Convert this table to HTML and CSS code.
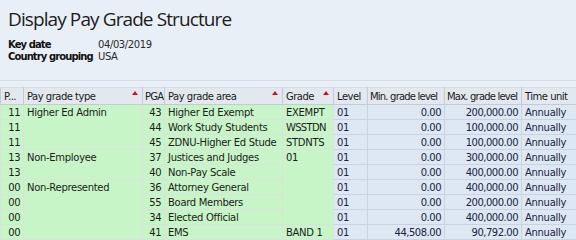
FILE: index.html
```html
<!DOCTYPE html>
<html>
<head>
<meta charset="utf-8">
<link rel="stylesheet" href="styles.css">
</head>
<body>
<div class="page">
  <h1 class="title">Display Pay Grade Structure</h1>
  <div class="meta">
    <div class="meta-row"><span class="meta-label">Key date</span><span class="meta-value">04/03/2019</span></div>
    <div class="meta-row"><span class="meta-label">Country grouping</span><span class="meta-value">USA</span></div>
  </div>
  <div class="sep"></div>
  <table class="grid">
    <colgroup>
      <col class="c1"><col class="c2"><col class="c3"><col class="c4"><col class="c5"><col class="c6"><col class="c7"><col class="c8"><col class="c9">
    </colgroup>
    <thead>
      <tr>
        <th>P...</th>
        <th class="sorted">Pay grade type</th>
        <th class="tight">PGA</th>
        <th class="sorted">Pay grade area</th>
        <th class="sorted">Grade</th>
        <th>Level</th>
        <th class="tight">Min. grade level</th>
        <th class="tight">Max. grade level</th>
        <th>Time unit</th>
      </tr>
    </thead>
    <tbody>
      <tr>
        <td class="k num">11</td>
        <td class="k" rowspan="3">Higher Ed Admin</td>
        <td class="k num">43</td>
        <td class="k">Higher Ed Exempt</td>
        <td class="k">EXEMPT</td>
        <td class="v">01</td>
        <td class="v num">0.00</td>
        <td class="v num">200,000.00</td>
        <td class="v">Annually</td>
      </tr>
      <tr>
        <td class="k num">11</td>
        <td class="k num">44</td>
        <td class="k">Work Study Students</td>
        <td class="k trunc">WSSTDN<span class="dots">...</span></td>
        <td class="v">01</td>
        <td class="v num">0.00</td>
        <td class="v num">100,000.00</td>
        <td class="v">Annually</td>
      </tr>
      <tr>
        <td class="k num">11</td>
        <td class="k num">45</td>
        <td class="k">ZDNU-Higher Ed Stude</td>
        <td class="k">STDNTS</td>
        <td class="v">01</td>
        <td class="v num">0.00</td>
        <td class="v num">100,000.00</td>
        <td class="v">Annually</td>
      </tr>
      <tr>
        <td class="k num">13</td>
        <td class="k" rowspan="2">Non-Employee</td>
        <td class="k num">37</td>
        <td class="k">Justices and Judges</td>
        <td class="k" rowspan="5">01</td>
        <td class="v">01</td>
        <td class="v num">0.00</td>
        <td class="v num">300,000.00</td>
        <td class="v">Annually</td>
      </tr>
      <tr>
        <td class="k num">13</td>
        <td class="k num">40</td>
        <td class="k">Non-Pay Scale</td>
        <td class="v">01</td>
        <td class="v num">0.00</td>
        <td class="v num">400,000.00</td>
        <td class="v">Annually</td>
      </tr>
      <tr>
        <td class="k num">00</td>
        <td class="k" rowspan="4">Non-Represented</td>
        <td class="k num">36</td>
        <td class="k">Attorney General</td>
        <td class="v">01</td>
        <td class="v num">0.00</td>
        <td class="v num">400,000.00</td>
        <td class="v">Annually</td>
      </tr>
      <tr>
        <td class="k num">00</td>
        <td class="k num">55</td>
        <td class="k">Board Members</td>
        <td class="v">01</td>
        <td class="v num">0.00</td>
        <td class="v num">200,000.00</td>
        <td class="v">Annually</td>
      </tr>
      <tr>
        <td class="k num">00</td>
        <td class="k num">34</td>
        <td class="k">Elected Official</td>
        <td class="v">01</td>
        <td class="v num">0.00</td>
        <td class="v num">400,000.00</td>
        <td class="v">Annually</td>
      </tr>
      <tr>
        <td class="k num">00</td>
        <td class="k num">41</td>
        <td class="k">EMS</td>
        <td class="k">BAND 1</td>
        <td class="v">01</td>
        <td class="v num">44,508.00</td>
        <td class="v num">90,792.00</td>
        <td class="v">Annually</td>
      </tr>
    </tbody>
  </table>
</div>
</body>
</html>
```

FILE: styles.css
```css
html, body {
  margin: 0;
  padding: 0;
  background: #e9eff6;
}
.page {
  font-family: "DejaVu Sans", Verdana, sans-serif;
  color: #222;
}
.title {
  margin: 0;
  padding: 7px 0 0 8px;
  height: 28px;
  box-sizing: border-box;
  font-family: "Open Sans", "DejaVu Sans", sans-serif;
  font-weight: 400;
  font-size: 19px;
  letter-spacing: -0.9px;
  line-height: 24px;
  color: #1c1c1c;
}
.meta {
  padding: 11px 0 0 8px;
  font-size: 10px;
  line-height: 12px;
}
.meta-row {
  display: flex;
  white-space: nowrap;
}
.meta-label {
  width: 90px;
  flex: none;
  font-weight: bold;
  letter-spacing: -0.9px;
  color: #111;
}
.meta-value {
  color: #2a2a2a;
  letter-spacing: -0.4px;
}
.sep {
  height: 17px;
  border-bottom: 1px solid #d6dde6;
  margin-bottom: 6px;
}
.grid {
  border-collapse: collapse;
  table-layout: fixed;
  width: 582px;
  font-size: 10px;
}
.c1 { width: 23px; }
.c2 { width: 119px; }
.c3 { width: 22px; }
.c4 { width: 118px; }
.c5 { width: 51px; }
.c6 { width: 34px; }
.c7 { width: 77px; }
.c8 { width: 77px; }
.c9 { width: 61px; }
.grid th {
  height: 16px;
  padding: 0 1px 0 3px;
  background: #e3e8ee;
  border: 1px solid #c3ccd6;
  border-top-color: #d7dde4;
  text-align: left;
  font-weight: normal;
  letter-spacing: -0.5px;
  color: #1a1a1a;
  white-space: nowrap;
  overflow: hidden;
  position: relative;
}
.grid th.tight {
  padding-left: 2px;
  padding-right: 0;
  letter-spacing: -0.8px;
}
.grid th.sorted::after {
  content: "";
  position: absolute;
  top: 3px;
  right: 4px;
  border-left: 3px solid transparent;
  border-right: 3px solid transparent;
  border-bottom: 4px solid #d0102a;
}
.grid td {
  height: 13px;
  padding: 1px 3px 0 3px;
  border: 1px solid #cfd8e2;
  white-space: nowrap;
  overflow: hidden;
  vertical-align: top;
  line-height: 13px;
  letter-spacing: -0.3px;
  color: #1a2440;
}
.grid td.k {
  background: #c8f5c8;
  border-color: #d9e2dc;
  color: #1c1c1c;
}
.grid td.v {
  background: #dde8f4;
  border-color: #c9d4e0;
  color: #1a2440;
}
.grid td.num {
  text-align: right;
  letter-spacing: -0.5px;
}
.grid td.trunc {
  position: relative;
  padding-right: 0;
  letter-spacing: -0.7px;
}
.dots {
  position: absolute;
  right: 1px;
  bottom: -2px;
  font-size: 6px;
  line-height: 6px;
  letter-spacing: 0;
  color: #444;
}
```
